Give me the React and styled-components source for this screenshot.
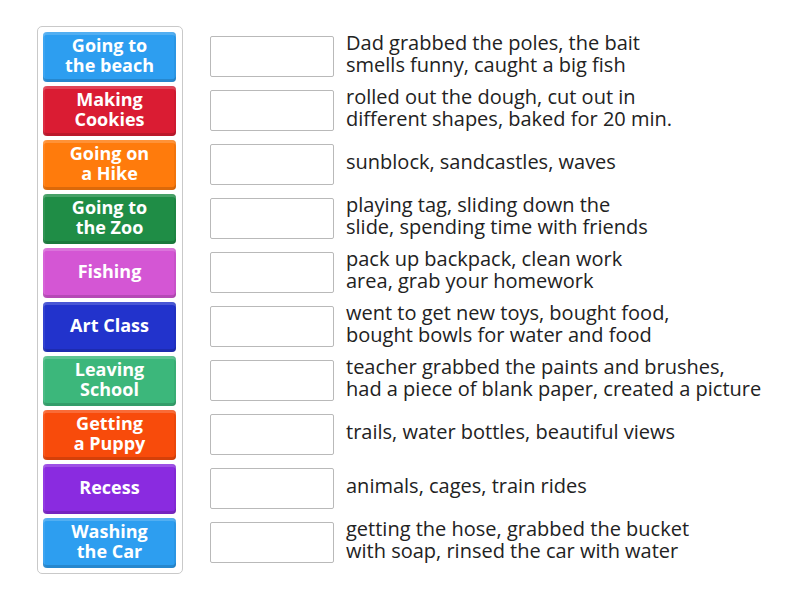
import React from 'react'
import styled, { createGlobalStyle } from 'styled-components'

const Global = createGlobalStyle`
  body {
    margin: 0;
    background: #fff;
    font-family: "Open Sans", "Liberation Sans", sans-serif;
  }
`

const Page = styled.div`
  display: flex;
  align-items: flex-start;
  gap: 27px;
  padding: 26px 0 0 37px;
`

const TilePanel = styled.div`
  width: 133px;
  display: flex;
  flex-direction: column;
  gap: 4px;
  padding: 5px 6px 5px 5px;
  border: 1px solid #c9c9c9;
  border-radius: 5px;
`

const Tile = styled.div`
  height: 50px;
  display: flex;
  align-items: center;
  justify-content: center;
  text-align: center;
  border-radius: 4px;
  color: #fff;
  font-weight: 700;
  font-size: 18px;
  line-height: 20px;
  padding-bottom: 4px;
  box-sizing: border-box;
  background: ${({ color }) => color};
  box-shadow: inset 0 3px 0 rgba(255, 255, 255, 0.18), inset 0 -3px 0 rgba(0, 0, 0, 0.14),
    inset 2px 0 0 rgba(255, 255, 255, 0.08), inset -2px 0 0 rgba(0, 0, 0, 0.05);
`

const TileText = styled.span`
  white-space: pre-line;
`

const Rows = styled.div`
  display: flex;
  flex-direction: column;
  gap: 4px;
  padding-top: 5px;
`

const Row = styled.div`
  height: 50px;
  display: flex;
  align-items: center;
  gap: 12px;
`

const DropBox = styled.div`
  width: 122px;
  height: 39px;
  flex-shrink: 0;
  border: 1px solid #b9b9b9;
  border-radius: 2px;
  background: #fff;
`

const Clue = styled.div`
  font-size: 20px;
  line-height: 22px;
  color: #222;
  white-space: pre-line;
  margin-top: -5px;
`

const tiles = [
  ['Going to\nthe beach', '#2d9ef0'],
  ['Making\nCookies', '#da1c33'],
  ['Going on\na Hike', '#ff7b0c'],
  ['Going to\nthe Zoo', '#1f8d46'],
  ['Fishing', '#d456d4'],
  ['Art Class', '#2233cc'],
  ['Leaving\nSchool', '#3cb77b'],
  ['Getting\na Puppy', '#f84b0b'],
  ['Recess', '#8a2be0'],
  ['Washing\nthe Car', '#2d9ef0'],
]

const clues = [
  'Dad grabbed the poles, the bait\nsmells funny, caught a big fish',
  'rolled out the dough, cut out in\ndifferent shapes, baked for 20 min.',
  'sunblock, sandcastles, waves',
  'playing tag, sliding down the\nslide, spending time with friends',
  'pack up backpack, clean work\narea, grab your homework',
  'went to get new toys, bought food,\nbought bowls for water and food',
  'teacher grabbed the paints and brushes,\nhad a piece of blank paper, created a picture',
  'trails, water bottles, beautiful views',
  'animals, cages, train rides',
  'getting the hose, grabbed the bucket\nwith soap, rinsed the car with water',
]

const App = () => {
  return (
    <>
      <Global />
      <Page>
        <TilePanel>
          {tiles.map(([label, color]) => (
            <Tile key={label} color={color}>
              <TileText>{label}</TileText>
            </Tile>
          ))}
        </TilePanel>
        <Rows>
          {clues.map((c) => (
            <Row key={c}>
              <DropBox />
              <Clue>{c}</Clue>
            </Row>
          ))}
        </Rows>
      </Page>
    </>
  )
}

export default App
